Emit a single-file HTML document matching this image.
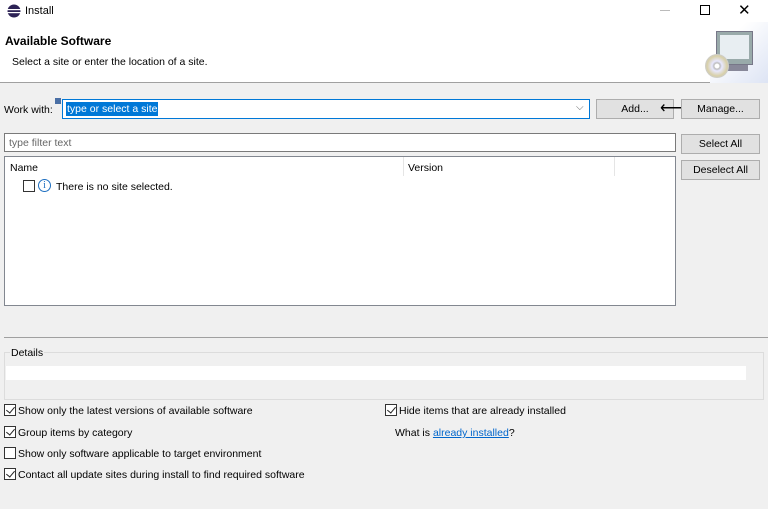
<!DOCTYPE html>
<html><head><style>
*{box-sizing:border-box;margin:0;padding:0}
body{width:768px;height:509px;background:#f0f0f0;font-family:"Liberation Sans",sans-serif;font-size:10.5px;color:#000;position:relative;overflow:hidden}
.a{position:absolute;white-space:nowrap}
.btn{position:absolute;background:#e1e1e1;border:1px solid #adadad;text-align:center;line-height:18px}
.cb{position:absolute;width:12px;height:12px;border:1px solid #333;background:#fff}
.cb.c::after{content:"";position:absolute;left:3px;top:0px;width:4px;height:7px;border:solid #222;border-width:0 1.3px 1.3px 0;transform:rotate(40deg)}
</style></head><body>
<div class="a" style="left:0;top:0;width:768px;height:83px;background:#fff;border-bottom:1px solid #a0a0a0"></div>
<svg class="a" style="left:7px;top:4px" width="14" height="14" viewBox="0 0 14 14"><circle cx="7" cy="7" r="6.5" fill="#2c2255"/><rect x="0" y="5" width="14" height="1.2" fill="#fff"/><rect x="0" y="8" width="14" height="1.2" fill="#fff"/></svg>
<div class="a" style="left:25px;top:5px;font-size:11px">Install</div>
<div class="a" style="left:660px;top:10px;width:10px;height:1px;background:#bbb"></div>
<div class="a" style="left:700px;top:5px;width:10px;height:10px;border:1px solid #000"></div>
<div class="a" style="left:738px;top:1px;font-size:15px">✕</div>
<div class="a" style="left:5px;top:34px;font-weight:bold;font-size:12px">Available Software</div>
<div class="a" style="left:12px;top:56px">Select a site or enter the location of a site.</div>
<div class="a" style="left:710px;top:22px;width:58px;height:61px;background:linear-gradient(135deg,#fff 30%,#dde4f4)"></div>
<div class="a" style="left:716px;top:31px;width:37px;height:34px;background:#9aa;border:1px solid #778"></div>
<div class="a" style="left:720px;top:35px;width:29px;height:24px;background:#e8eef2"></div>
<div class="a" style="left:728px;top:65px;width:20px;height:6px;background:#889"></div>
<div class="a" style="left:705px;top:54px;width:24px;height:24px;border-radius:50%;background:radial-gradient(circle,#fff 0 2px,#bbb 3px,#e8e8ff 5px,#d8d0a8 10px,#ccc 12px)"></div>
<div class="a" style="left:4px;top:104px">Work with:</div>
<div class="a" style="left:55px;top:98px;width:6px;height:6px;background:#4a6fa5"></div>
<div class="a" style="left:62px;top:99px;width:528px;height:20px;background:#fff;border:1px solid #0078d7"></div>
<div class="a" style="left:66px;top:102px;background:#0078d7;color:#fff;padding:0 1px;line-height:14px">type or select a site</div>
<div class="a" style="left:576px;top:102px;color:#666;font-size:10px">⌵</div>
<div class="btn" style="left:596px;top:99px;width:78px;height:20px">Add...</div>
<div class="a" style="left:660px;top:101px;font-size:16px;line-height:16px">⟵</div>
<div class="btn" style="left:681px;top:99px;width:79px;height:20px">Manage...</div>
<div class="a" style="left:4px;top:133px;width:672px;height:19px;background:#fff;border:1px solid #7a7a7a"></div>
<div class="a" style="left:9px;top:137px;color:#666">type filter text</div>
<div class="btn" style="left:681px;top:134px;width:79px;height:20px">Select All</div>
<div class="btn" style="left:681px;top:160px;width:79px;height:20px">Deselect All</div>
<div class="a" style="left:4px;top:156px;width:672px;height:150px;background:#fff;border:1px solid #828790"></div>
<div class="a" style="left:403px;top:157px;width:1px;height:19px;background:#e5e5e5"></div>
<div class="a" style="left:614px;top:157px;width:1px;height:19px;background:#e5e5e5"></div>
<div class="a" style="left:10px;top:162px">Name</div>
<div class="a" style="left:408px;top:162px">Version</div>
<div class="cb" style="left:23px;top:180px"></div>
<div class="a" style="left:38px;top:179px;width:13px;height:13px;border:1px solid #1e6fc0;border-radius:50%;color:#1e6fc0;font-size:10px;line-height:11px;text-align:center;font-family:'Liberation Serif',serif">i</div>
<div class="a" style="left:56px;top:181px">There is no site selected.</div>
<div class="a" style="left:4px;top:337px;width:764px;height:1px;background:#a0a0a0"></div>
<div class="a" style="left:4px;top:352px;width:760px;height:48px;border:1px solid #dcdcdc"></div>
<div class="a" style="left:10px;top:347px;background:#f0f0f0;padding:0 1px">Details</div>
<div class="a" style="left:6px;top:366px;width:740px;height:14px;background:#fff"></div>
<div class="cb c" style="left:4px;top:404px"></div><div class="a" style="left:18px;top:405px">Show only the latest versions of available software</div>
<div class="cb c" style="left:4px;top:426px"></div><div class="a" style="left:18px;top:427px">Group items by category</div>
<div class="cb" style="left:4px;top:447px"></div><div class="a" style="left:18px;top:448px">Show only software applicable to target environment</div>
<div class="cb c" style="left:4px;top:468px"></div><div class="a" style="left:18px;top:469px">Contact all update sites during install to find required software</div>
<div class="cb c" style="left:385px;top:404px"></div><div class="a" style="left:399px;top:405px">Hide items that are already installed</div>
<div class="a" style="left:395px;top:427px">What is <span style="color:#0066cc;text-decoration:underline">already installed</span>?</div>
</body></html>
